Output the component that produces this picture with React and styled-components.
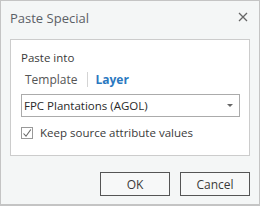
import React from 'react'
import styled, { createGlobalStyle } from 'styled-components'

const Global = createGlobalStyle`
  html, body {
    margin: 0;
    padding: 0;
    background: #ffffff;
  }
  * {
    box-sizing: border-box;
  }
`

const Dialog = styled.div`
  width: 260px;
  height: 206px;
  border: 1px solid #c4c4c4;
  border-bottom-width: 2px;
  background: #f4f6f6;
  display: flex;
  flex-direction: column;
  font-family: 'Open Sans', 'Noto Sans', sans-serif;
  color: #262626;
`

const Header = styled.div`
  height: 38px;
  display: flex;
  align-items: center;
  justify-content: space-between;
  padding: 0 11px 0 9px;
`

const Title = styled.div`
  font-size: 13px;
  color: #5b6066;
  margin-top: -4px;
`

const Close = styled.button`
  border: none;
  background: none;
  padding: 0;
  width: 10px;
  height: 10px;
  display: flex;
  margin-top: -6px;
  cursor: pointer;
`

const Panel = styled.div`
  margin: 0 9px;
  height: 117px;
  background: #ffffff;
  border: 1px solid #cccccc;
  padding: 10px 9px 0 10px;
  display: flex;
  flex-direction: column;
`

const Label = styled.div`
  font-size: 11.5px;
  line-height: 16px;
  color: #3a3a3a;
`

const Tabs = styled.div`
  display: flex;
  align-items: center;
  height: 22px;
  margin-top: 2px;
  padding-left: 4px;
`

const Tab = styled.span`
  font-size: 12px;
  font-weight: ${p => (p.active ? 700 : 400)};
  color: ${p => (p.active ? '#2a78c0' : '#555555')};
`

const Divider = styled.span`
  width: 1px;
  height: 15px;
  background: #d4d4d4;
  margin: 0 8px 0 9px;
`

const Select = styled.div`
  margin-top: 4px;
  height: 23px;
  border: 1px solid #ababab;
  display: flex;
  align-items: center;
  justify-content: space-between;
  padding: 0 6px 0 2px;
  font-size: 11.5px;
  color: #2a2a2a;
`

const Caret = styled.span`
  width: 0;
  height: 0;
  border-left: 3px solid transparent;
  border-right: 3px solid transparent;
  border-top: 3px solid #666666;
  margin-top: -1px;
`

const CheckRow = styled.label`
  display: flex;
  align-items: center;
  margin-top: 8px;
  font-size: 11.5px;
  color: #3a3a3a;
`

const Box = styled.span`
  width: 12px;
  height: 12px;
  border: 1px solid #999999;
  background: #ffffff;
  display: flex;
  align-items: center;
  justify-content: center;
  margin-right: 7px;
`

const Footer = styled.div`
  display: flex;
  justify-content: flex-end;
  gap: 10px;
  padding: 16px 9px 0 0;
`

const Button = styled.button`
  width: 70px;
  height: 24px;
  border: 1px solid #555555;
  background: #f7f8f8;
  font-family: inherit;
  font-size: 12px;
  color: #3a3a3a;
  padding: 0;
  cursor: pointer;
`

export default function App() {
  return (
    <>
      <Global />
      <Dialog>
        <Header>
          <Title>Paste Special</Title>
          <Close aria-label="Close">
            <svg width="10" height="10" viewBox="0 0 10 10">
              <path d="M1 1 L9 9 M9 1 L1 9" stroke="#666" strokeWidth="1.3" fill="none" />
            </svg>
          </Close>
        </Header>
        <Panel>
          <Label>Paste into</Label>
          <Tabs>
            <Tab>Template</Tab>
            <Divider />
            <Tab active>Layer</Tab>
          </Tabs>
          <Select>
            <span>FPC Plantations (AGOL)</span>
            <Caret />
          </Select>
          <CheckRow>
            <Box>
              <svg width="10" height="10" viewBox="0 0 10 10">
                <path d="M1.5 5.5 L4 8.2 L8.8 1.5" stroke="#666" strokeWidth="1.1" fill="none" />
              </svg>
            </Box>
            Keep source attribute values
          </CheckRow>
        </Panel>
        <Footer>
          <Button>OK</Button>
          <Button>Cancel</Button>
        </Footer>
      </Dialog>
    </>
  )
}
